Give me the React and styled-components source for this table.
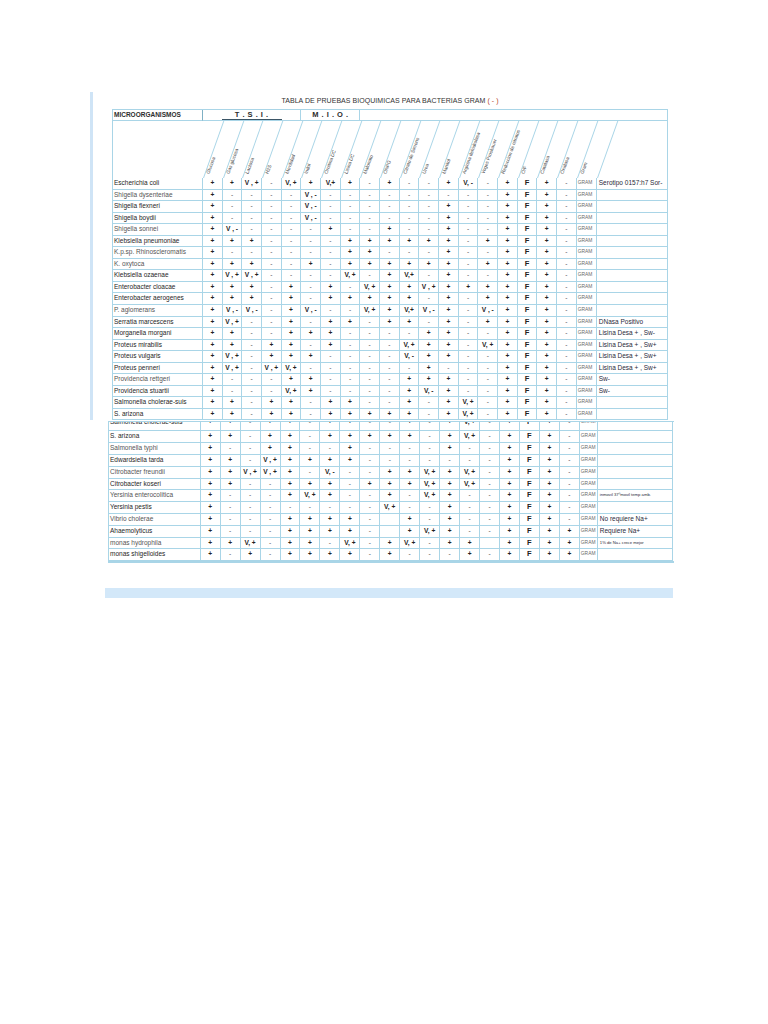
import React from "react";
import styled, { createGlobalStyle } from "styled-components";

const LINE = "#a9d5e7";
const FONT = `"Liberation Sans", Arial, sans-serif`;

const GlobalStyle = createGlobalStyle`
  html, body {
    margin: 0;
    padding: 0;
    background: #ffffff;
  }
  body {
    font-family: ${FONT};
    color: #333;
  }
`;

const Page = styled.div`
  width: 768px;
  height: 1024px;
  padding-top: 92px;
  box-sizing: border-box;
  overflow: hidden;
`;

const TopSheet = styled.div`
  margin-left: 90px;
  width: 600px;
  border-left: 3px solid #cfe4f6;
  padding-left: 19px;
  box-sizing: border-box;
`;

const Title = styled.div`
  width: 556px;
  padding-top: 3px;
  margin-bottom: 2px;
  line-height: 12px;
  font-size: 7px;
  text-align: center;
  color: #333;
  letter-spacing: 0.05px;

  span {
    color: #b5462a;
  }
`;

const Table = styled.div`
  width: ${(p) => p.$w}px;
  border-top: 1px solid ${LINE};
  border-left: 1px solid ${LINE};
  box-sizing: border-box;
`;

const HeadRow = styled.div`
  display: grid;
  grid-template-columns: 90px 98.4px 59px 1fr;
  height: 11px;
`;

const HeadCell = styled.div`
  border-right: 1px solid ${(p) => (p.$strong ? "#7fb0c4" : LINE)};
  border-bottom: 1px solid ${LINE};
  box-sizing: border-box;
  font-size: ${(p) => (p.$group ? "7.5px" : "6.5px")};
  font-weight: bold;
  line-height: 10px;
  color: #2d2d2d;
  text-align: ${(p) => (p.$group ? "center" : "left")};
  padding-left: ${(p) => (p.$group ? 0 : 1)}px;
  letter-spacing: ${(p) => (p.$group ? "0.5px" : "0")};
  white-space: nowrap;
  position: relative;
`;

const GroupMark = styled.span`
  display: inline-block;
  width: 60px;
  border-bottom: 1px solid #3b5566;
  line-height: 9px;
`;

const SlantBand = styled.div`
  display: flex;
  height: 57px;
  border-right: 1px solid ${LINE};
  box-sizing: border-box;
`;

const SlantSpacer = styled.div`
  width: 90px;
  flex: none;
`;

const SlantCell = styled.div`
  width: ${(p) => p.$w}px;
  flex: none;
  position: relative;

  &::before {
    content: "";
    position: absolute;
    left: 0;
    bottom: 0;
    height: 100%;
    border-left: 1px solid ${LINE};
    transform-origin: 0 100%;
    transform: skewX(-19.6deg);
  }
`;

const SlantLabel = styled.span`
  position: absolute;
  left: 8px;
  bottom: 3px;
  transform-origin: 0 100%;
  transform: rotate(-70deg);
  font-size: 4.8px;
  line-height: 1;
  color: #444;
  white-space: nowrap;
`;

const Row = styled.div`
  display: grid;
  grid-template-columns: ${(p) => p.$cols};
  height: ${(p) => p.$h}px;
  overflow: hidden;
`;

const Cell = styled.div`
  border-right: 1px solid ${LINE};
  border-bottom: 1px solid ${LINE};
  box-sizing: border-box;
  white-space: nowrap;
  overflow: hidden;
  line-height: ${(p) => p.$h - 1}px;
`;

const NameCell = styled(Cell)`
  font-size: 6.5px;
  padding-left: 1px;
  color: ${(p) => (p.$soft ? "#555" : "#262626")};
`;

const ValueCell = styled(Cell)`
  text-align: center;
  font-size: ${(p) => (p.$kind === "F" ? "7.5px" : "6.6px")};
  font-weight: ${(p) => (p.$kind === "-" ? "normal" : "bold")};
  color: ${(p) => (p.$kind === "-" ? "#555" : "#222")};
`;

const GramCell = styled(Cell)`
  font-size: 4.9px;
  color: #6a6a6a;
  padding-left: 1px;
`;

const NoteCell = styled(Cell)`
  font-size: ${(p) => (p.$tiny ? "4.2px" : "6.5px")};
  padding-left: 2px;
  color: #2a2a3a;
`;

const Cut = styled.span`
  display: block;
  margin-top: -6px;
`;

const BottomSheet = styled.div`
  margin-left: 108px;
  margin-top: 1px;
  width: 566px;
  border-bottom: 2px solid ${LINE};
`;

const Bar = styled.div`
  margin-left: 105px;
  margin-top: 25px;
  width: 568px;
  height: 10px;
  background: #d3e8f9;
`;

const labels = [
  "Glucosa",
  "Gas glucosa",
  "Lactosa",
  "H2S",
  "Movilidad",
  "Indol",
  "Ornitina DC",
  "Lisina DC",
  "Malonato",
  "ONPG",
  "Citrato de Simons",
  "Urea",
  "Manitol",
  "Arginina dehidrolasa",
  "Voges Proskauer",
  "Reduccion de nitratos",
  "O/F",
  "Catalasa",
  "Oxidasa",
  "Gram",
];

const v = (s) => s.split("|");

const topRows = [
  ["Escherichia coli", v("+|+|V , +|-|V, +|+|V,+|+|-|+|-|-|+|V, -|-|+|F|+|-"), "Serotipo 0157:h7 Sor-"],
  ["Shigella dysenteriae", v("+|-|-|-|-|V , -|-|-|-|-|-|-|-|-|-|+|F|+|-"), "", true],
  ["Shigella flexneri", v("+|-|-|-|-|V , -|-|-|-|-|-|-|+|-|-|+|F|+|-")],
  ["Shigella boydii", v("+|-|-|-|-|V , -|-|-|-|-|-|-|+|-|-|+|F|+|-")],
  ["Shigella sonnei", v("+|V , -|-|-|-|-|+|-|-|+|-|-|+|-|-|+|F|+|-"), "", true],
  ["Klebsiella pneumoniae", v("+|+|+|-|-|-|-|+|+|+|+|+|+|-|+|+|F|+|-")],
  ["K.p.sp. Rhinoscleromatis", v("+|-|-|-|-|-|-|+|+|-|-|-|+|-|-|+|F|+|-"), "", true],
  ["K. oxytoca", v("+|+|+|-|-|+|-|+|+|+|+|+|+|-|+|+|F|+|-"), "", true],
  ["Klebsiella ozaenae", v("+|V , +|V , +|-|-|-|-|V, +|-|+|V,+|-|+|-|-|+|F|+|-")],
  ["Enterobacter cloacae", v("+|+|+|-|+|-|+|-|V, +|+|+|V , +|+|+|+|+|F|+|-")],
  ["Enterobacter aerogenes", v("+|+|+|-|+|-|+|+|+|+|+|-|+|-|+|+|F|+|-")],
  ["P. aglomerans", v("+|V , -|V , -|-|+|V , -|-|-|V, +|+|V,+|V , -|+|-|V , -|+|F|+|-"), "", true],
  ["Serratia marcescens", v("+|V , +|-|-|+|-|+|+|-|+|+|-|+|-|+|+|F|+|-"), "DNasa  Positivo"],
  ["Morganella morgani", v("+|+|-|-|+|+|+|-|-|-|-|+|+|-|-|+|F|+|-"), "Lisina Desa + , Sw-"],
  ["Proteus mirabilis", v("+|+|-|+|+|-|+|-|-|-|V, +|+|+|-|V, +|+|F|+|-"), "Lisina Desa + , Sw+"],
  ["Proteus vulgaris", v("+|V , +|-|+|+|+|-|-|-|-|V, -|+|+|-|-|+|F|+|-"), "Lisina Desa + , Sw+"],
  ["Proteus penneri", v("+|V , +|-|V , +|V, +|-|-|-|-|-|-|+|-|-|-|+|F|+|-"), "Lisina Desa + , Sw+"],
  ["Providencia rettgeri", v("+|-|-|-|+|+|-|-|-|-|+|+|+|-|-|+|F|+|-"), "Sw-", true],
  ["Providencia stuartii", v("+|-|-|-|V, +|+|-|-|-|-|+|V, -|+|-|-|+|F|+|-"), "Sw-"],
  ["Salmonella cholerae-suis", v("+|+|-|+|+|-|+|+|-|-|+|-|+|V, +|-|+|F|+|-")],
  ["S. arizona", v("+|+|-|+|+|-|+|+|+|+|+|-|+|V, +|-|+|F|+|-")],
];

const bottomRows = [
  ["S. arizona", v("+|+|-|+|+|-|+|+|+|+|+|-|+|V, +|-|+|F|+|-")],
  ["Salmonella typhi", v("+|-|-|+|+|-|-|+|-|-|-|-|+|-|-|+|F|+|-"), "", true],
  ["Edwardsiella tarda", v("+|+|-|V , +|+|+|+|+|-|-|-|-|-|-|-|+|F|+|-")],
  ["Citrobacter freundii", v("+|+|V , +|V , +|+|-|V, -|-|-|+|+|V, +|+|V, +|-|+|F|+|-"), "", true],
  ["Citrobacter koseri", v("+|+|-|-|+|+|+|-|+|+|+|V, +|+|V, +|-|+|F|+|-")],
  ["Yersinia enterocolitica", v("+|-|-|-|+|V, +|+|-|-|+|-|V, +|+|-|-|+|F|+|-"), "inmovil 37ºmovil temp amb.", true, true],
  ["Yersinia pestis", v("+|-|-|-|-|-|-|-|-|V, +|-|-|+|-|-|+|F|+|-")],
  ["Vibrio  cholerae", v("+|-|-|-|+|+|+|+|-||+|-|+|-|-|+|F|+|-"), "No requiere Na+", true],
  ["Ahaemolyticus", v("+|-|-|-|+|+|+|+|-||+|V, +|+|-|-|+|F|+|+"), "Requiere Na+"],
  ["monas hydrophila", v("+|+|V, +|-|+|+|-|V, +|-|+|V, +|-|+|+||+|F|+|+"), "1% de Na+ crece mejor", true, true],
  ["monas shigelloides", v("+|-|+|-|+|+|+|+|-|+|-|-|-|+|-|+|F|+|+")],
];

const TOP_COLS = "90px repeat(19, 19.68px) 20px 71px";
const BOTTOM_COLS = "91.7px repeat(19, 19.96px) 18px 75px";

const DataRow = ({ row, cols, h, cut }) => {
  const [name, vals, note = "", soft = false, tiny = false] = row;
  const lh = cut ? 12 : h;
  const wrap = (t) => (cut ? <Cut>{t}</Cut> : t);
  return (
    <Row $cols={cols} $h={h}>
      <NameCell $h={lh} $soft={soft}>
        {wrap(name)}
      </NameCell>
      {vals.map((val, i) => (
        <ValueCell key={i} $h={lh} $kind={val}>
          {wrap(val)}
        </ValueCell>
      ))}
      <GramCell $h={lh}>{wrap("GRAM")}</GramCell>
      <NoteCell $h={lh} $tiny={tiny}>
        {wrap(note)}
      </NoteCell>
    </Row>
  );
};

export default function App() {
  return (
    <Page>
      <GlobalStyle />
      <TopSheet>
        <Title>
          TABLA DE PRUEBAS BIOQUIMICAS PARA BACTERIAS GRAM <span>( - )</span>
        </Title>
        <Table $w={556}>
          <HeadRow>
            <HeadCell $strong>MICROORGANISMOS</HeadCell>
            <HeadCell $group>
              <GroupMark>T . S . I .</GroupMark>
            </HeadCell>
            <HeadCell $group>M . I . O .</HeadCell>
            <HeadCell />
          </HeadRow>
          <SlantBand>
            <SlantSpacer />
            {labels.map((l, i) => (
              <SlantCell key={l} $w={i === 19 ? 20 : 19.68}>
                <SlantLabel>{l}</SlantLabel>
              </SlantCell>
            ))}
            <SlantCell $w={20} />
          </SlantBand>
          {topRows.map((r, i) => (
            <DataRow key={i} row={r} cols={TOP_COLS} h={11.55} />
          ))}
        </Table>
      </TopSheet>
      <BottomSheet>
        <Table $w={566}>
          <DataRow
            row={["Salmonella cholerae-suis", v("+|+|-|+|+|-|+|+|-|-|+|-|+|V, +|-|+|F|+|-")]}
            cols={BOTTOM_COLS}
            h={9}
            cut
          />
          {bottomRows.map((r, i) => (
            <DataRow key={i} row={r} cols={BOTTOM_COLS} h={11.8} />
          ))}
        </Table>
      </BottomSheet>
      <Bar />
    </Page>
  );
}
